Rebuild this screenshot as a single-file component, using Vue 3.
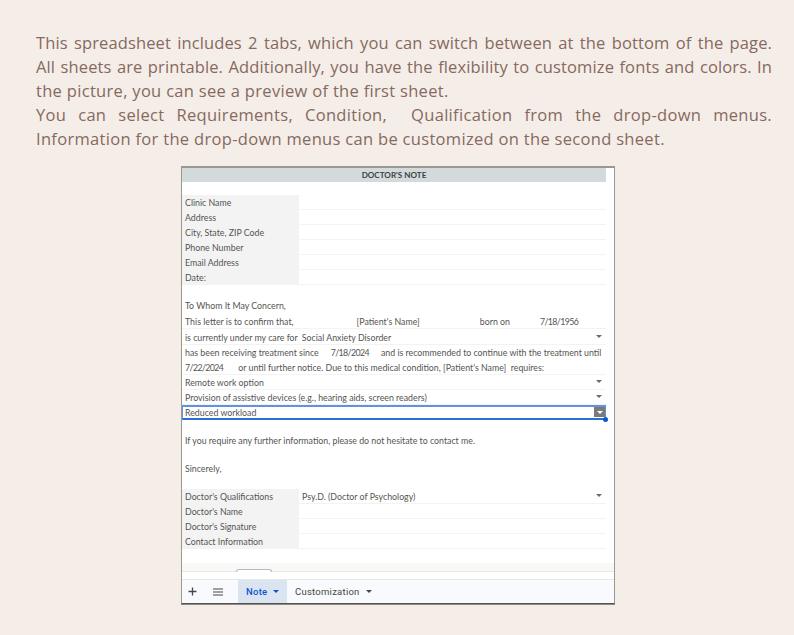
<template>
  <div class="page">
    <div class="intro">
      <div class="line fit tight">This spreadsheet includes 2 tabs, which you can switch between at the bottom of the page.</div>
      <div class="line fit tight">All sheets are printable. Additionally, you have the flexibility to customize fonts and colors. In</div>
      <div class="line">the picture, you can see a preview of the first sheet.</div>
      <div class="line fit">You can select Requirements, Condition, &nbsp;Qualification from the drop-down menus.</div>
      <div class="line">Information for the drop-down menus can be customized on the second sheet.</div>
    </div>

    <div class="sheet">
      <div class="grid">
        <div class="title">DOCTOR'S NOTE</div>
        <div class="gap"></div>

        <div v-for="label in clinicRows" :key="label" class="row field">
          <span class="label">{{ label }}</span>
          <span class="value"></span>
        </div>
        <div class="gap"></div>

        <div class="row"><span class="cell">To Whom It May Concern,</span></div>
        <div class="row tall confirm lined">
          <span>This letter is to confirm that,</span>
          <span class="patient">[Patient's Name]</span>
          <span class="born">born on</span>
          <span class="birth">7/18/1956</span>
        </div>
        <div class="row tall lined">
          <span class="cell">is currently under my care for</span>
          <span class="cell picked">Social Anxiety Disorder</span>
          <i class="caret"></i>
        </div>
        <div class="row treat">
          <span>has been receiving treatment since</span>
          <span class="since">7/18/2024</span>
          <span class="until">and is recommended to continue with the treatment until</span>
        </div>
        <div class="row treat lined">
          <span class="due">7/22/2024</span>
          <span class="further">or until further notice. Due to this medical condition, [Patient's Name] &nbsp;requires:</span>
        </div>
        <div class="row lined">
          <span class="cell">Remote work option</span>
          <i class="caret"></i>
        </div>
        <div class="row lined">
          <span class="cell">Provision of assistive devices (e.g., hearing aids, screen readers)</span>
          <i class="caret"></i>
        </div>
        <div class="row selected">
          <span class="cell">Reduced workload</span>
          <b class="drop"><i></i></b>
          <em class="handle"></em>
        </div>
        <div class="gap"></div>

        <div class="row"><span class="cell">If you require any further information, please do not hesitate to contact me.</span></div>
        <div class="gap"></div>
        <div class="row"><span class="cell">Sincerely,</span></div>
        <div class="gap"></div>

        <div v-for="item in doctorRows" :key="item.label" class="row field">
          <span class="label">{{ item.label }}</span>
          <span class="value">{{ item.value }}</span>
          <i v-if="item.value" class="caret"></i>
        </div>
      </div>

      <div class="tail">
        <div class="strip"></div>
        <div class="scroll"><span class="thumb"></span></div>
      </div>

      <div class="tabs">
        <svg class="plus" width="9" height="9" viewBox="0 0 9 9"><path d="M4.5 0.5v8M0.5 4.5h8" stroke="#444746" stroke-width="1.3" /></svg>
        <svg class="menu" width="10" height="8" viewBox="0 0 10 8"><path d="M0 1h10M0 4h10M0 7h10" stroke="#444746" stroke-width="1.1" /></svg>
        <div class="tab active">Note <i></i></div>
        <div class="tab">Customization <i></i></div>
      </div>
    </div>
  </div>
</template>

<script setup>
const clinicRows = ['Clinic Name', 'Address', 'City, State, ZIP Code', 'Phone Number', 'Email Address', 'Date:']

const doctorRows = [
  { label: "Doctor's Qualifications", value: 'Psy.D. (Doctor of Psychology)' },
  { label: "Doctor's Name", value: '' },
  { label: "Doctor's Signature", value: '' },
  { label: 'Contact Information', value: '' }
]
</script>

<style>
html,
body {
  background: #f5eee8;
}
</style>

<style scoped>
.page {
  width: 794px;
  height: 635px;
  box-sizing: border-box;
  padding-top: 31px;
  background: #f5eee8;
  overflow: hidden;
}

.intro {
  width: 736px;
  margin: 0 0 15px 36px;
  font-family: "Open Sans", sans-serif;
  font-size: 16.5px;
  line-height: 24px;
  letter-spacing: 0.31px;
  color: #86695f;
}

.line {
  white-space: nowrap;
}

.line.fit {
  text-align: justify;
  text-align-last: justify;
  white-space: normal;
}

.line.tight {
  letter-spacing: 0.12px;
  word-spacing: -0.4px;
}

.sheet {
  width: 432px;
  height: 435px;
  margin-left: 181px;
  border: 1px solid #9b9890;
  border-top-width: 2px;
  border-bottom: 1px solid #55534f;
  box-shadow: 0 1px 0 #8d8a85;
  background: #fff;
  display: flex;
  flex-direction: column;
  font-family: Lato, sans-serif;
  font-size: 8.8px;
  color: #555452;
}

.grid {
  width: 424px;
  height: 381px;
}

.title {
  height: 14px;
  line-height: 14px;
  background: #d2dadb;
  text-align: center;
  font-size: 8.1px;
  font-weight: 700;
  color: #3c3f40;
}

.gap {
  height: 13px;
}

.row {
  position: relative;
  display: flex;
  align-items: center;
  height: 15px;
  box-sizing: border-box;
  white-space: nowrap;
}

.row.tall {
  height: 16px;
  padding-top: 2px;
}

.lined,
.field {
  border-bottom: 1px solid #f3f3f1;
}

.cell {
  padding-left: 3px;
}

.picked {
  padding-left: 4px;
}

.label {
  width: 117px;
  height: 15px;
  line-height: 15px;
  padding-left: 3px;
  box-sizing: border-box;
  background: #f3f3f3;
  flex-shrink: 0;
}

.value {
  padding-left: 3px;
}

.confirm,
.treat {
  padding-left: 3px;
}

.patient {
  margin-left: 63px;
}

.born {
  margin-left: 60px;
}

.birth,
.since,
.due {
  letter-spacing: -0.6px;
}

.birth {
  margin-left: 30px;
}

.since {
  margin-left: 12px;
}

.until {
  margin-left: 12px;
}

.further {
  margin-left: 15px;
}

.caret {
  position: absolute;
  right: 4px;
  top: 5px;
  border-left: 3px solid transparent;
  border-right: 3px solid transparent;
  border-top: 3px solid #6b6b6b;
}

.tall .caret {
  top: 6px;
}

.selected {
  border: 1px solid #5f93dd;
  border-top-width: 2px;
  border-bottom-width: 2px;
  border-bottom-color: #2a6fd6;
}

.selected .cell {
  padding-left: 2px;
}

.drop {
  position: absolute;
  right: 0;
  top: 0;
  width: 11px;
  height: 10px;
  background: #7a7a7a;
  display: flex;
  align-items: center;
  justify-content: center;
}

.drop i {
  border-left: 3px solid transparent;
  border-right: 3px solid transparent;
  border-top: 3px solid #fff;
}

.handle {
  position: absolute;
  right: -3px;
  bottom: -4px;
  width: 5px;
  height: 5px;
  border-radius: 50%;
  background: #0b57d0;
}

.tail {
  flex: 1;
  padding-top: 14px;
  box-sizing: border-box;
}

.strip {
  height: 8px;
  background: #f8f8f6;
}

.scroll {
  position: relative;
  height: 8px;
  box-sizing: border-box;
  border-top: 1px solid #e8e8e6;
}

.thumb {
  position: absolute;
  left: 54px;
  top: -3px;
  width: 36px;
  height: 3px;
  box-sizing: border-box;
  border: 1px solid #b9b9b9;
  border-bottom: 0;
  border-radius: 3px 3px 0 0;
  background: #fff;
}

.tabs {
  height: 24px;
  box-sizing: border-box;
  flex-shrink: 0;
  display: flex;
  align-items: center;
  background: #f8fafd;
  border-top: 1px solid #e6e8e8;
  font-family: Roboto, sans-serif;
  font-size: 9.5px;
  letter-spacing: 0.25px;
  color: #444746;
}

.plus {
  margin-left: 6px;
}

.menu {
  margin-left: 16px;
}

.tab {
  height: 100%;
  display: flex;
  align-items: center;
  gap: 6px;
  padding: 0 8px;
}

.tab i {
  border-left: 3px solid transparent;
  border-right: 3px solid transparent;
  border-top: 3px solid currentColor;
}

.tab.active {
  margin-left: 15px;
  width: 49px;
  box-sizing: border-box;
  background: #dbe4f1;
  color: #0b57d0;
  font-weight: 500;
}
</style>
